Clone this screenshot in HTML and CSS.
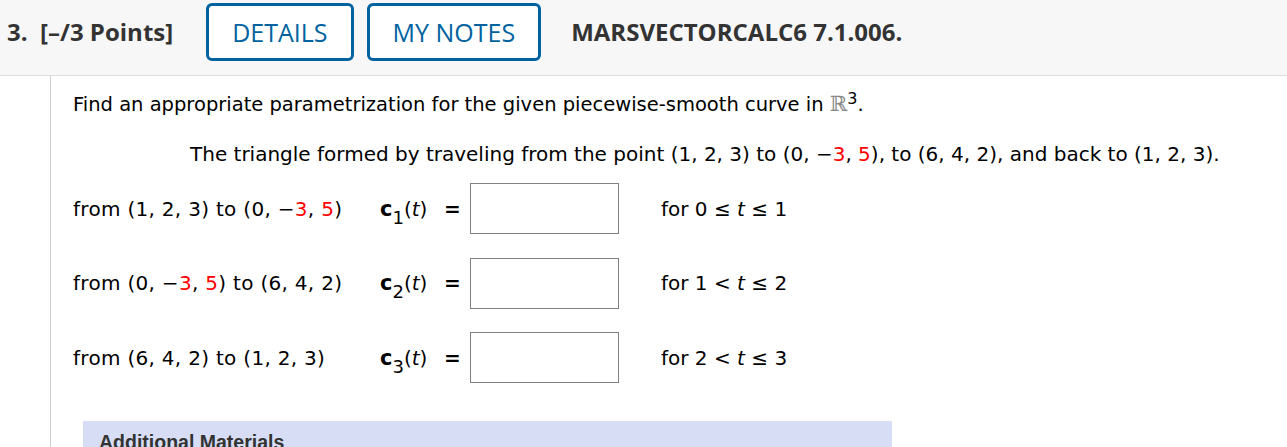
FILE: index.html
```html
<!DOCTYPE html>
<html lang="en">
<head>
    <meta charset="UTF-8">
    <title>MARSVECTORCALC6 7.1.006</title>
    <link rel="stylesheet" href="styles.css">
</head>
<body>
    <div class="question-header">
        <span class="q-number">3.&nbsp; [&ndash;/3 Points]</span>
        <button class="q-button">DETAILS</button>
        <button class="q-button">MY NOTES</button>
        <span class="q-ref">MARSVECTORCALC6 7.1.006.</span>
    </div>

    <div class="question-body">
        <p class="prompt">Find an appropriate parametrization for the given piecewise-smooth curve in <span class="reals">&#8477;</span><sup>3</sup>.</p>
        <p class="statement">The triangle formed by traveling from the point (1, 2, 3) to (0, &minus;<span class="red">3</span>, <span class="red">5</span>), to (6, 4, 2), and back to (1, 2, 3).</p>

        <div class="pieces">
            <span class="seg">from (1, 2, 3) to (0, &minus;<span class="red">3</span>, <span class="red">5</span>)</span>
            <span class="fn"><b>c</b><sub>1</sub>(<i>t</i>)</span>
            <span class="eq">=</span>
            <input class="answer" type="text">
            <span class="range">for 0 &le; <i>t</i> &le; 1</span>

            <span class="seg">from (0, &minus;<span class="red">3</span>, <span class="red">5</span>) to (6, 4, 2)</span>
            <span class="fn"><b>c</b><sub>2</sub>(<i>t</i>)</span>
            <span class="eq">=</span>
            <input class="answer" type="text">
            <span class="range">for 1 &lt; <i>t</i> &le; 2</span>

            <span class="seg">from (6, 4, 2) to (1, 2, 3)</span>
            <span class="fn"><b>c</b><sub>3</sub>(<i>t</i>)</span>
            <span class="eq">=</span>
            <input class="answer" type="text">
            <span class="range">for 2 &lt; <i>t</i> &le; 3</span>
        </div>

        <div class="materials">Additional Materials</div>
    </div>
</body>
</html>
```

FILE: styles.css
```css
* { box-sizing: border-box; }

body {
    margin: 0;
    background: #fff;
    color: #000;
    font-family: "DejaVu Sans", Verdana, sans-serif;
    overflow: hidden;
}

.question-header {
    display: flex;
    align-items: center;
    height: 76px;
    padding: 2px 0 14px 7px;
    background: #f7f7f7;
    border-bottom: 1px solid #dcdcdc;
    font-family: "Open Sans", sans-serif;
}

.q-number, .q-ref {
    font-size: 24px;
    font-weight: 700;
    color: #333;
}

.q-number { margin-right: 33px; }
.q-ref { margin-left: 17px; }

.q-button {
    height: 58px;
    padding: 0 23px;
    margin-right: 13px;
    background: #fff;
    border: 3px solid #00639f;
    border-radius: 6px;
    color: #00639f;
    font-family: "Open Sans", sans-serif;
    font-size: 25px;
    font-weight: 500;
}

.question-body {
    margin-left: 50px;
    padding: 14px 0 0 22px;
    border-left: 1px solid #cfcfcf;
    min-height: 400px;
}

.prompt, .statement {
    margin: 0;
    font-size: 19.5px;
    line-height: 28px;
}

.statement {
    margin-top: 21px;
    padding-left: 117px;
    font-size: 20px;
}

.reals {
    color: #888;
    font-family: "DejaVu Serif", serif;
    font-size: 21px;
}

sup { font-size: 16px; line-height: 0; }

.red { color: #f00; }

.pieces {
    display: grid;
    grid-template-columns: 307px 64px 26px 149px auto;
    grid-auto-rows: 51px;
    row-gap: 23.5px;
    align-items: center;
    margin-top: 15px;
    font-size: 20px;
}

.seg { letter-spacing: 0.3px; }

.fn b { font-weight: 700; font-size: 21px; }
.fn sub { font-size: 18px; line-height: 0; vertical-align: -8px; }

.eq { font-weight: 700; }

.answer {
    width: 149px;
    height: 51px;
    border: 1px solid #808080;
    background: #fff;
    margin: 0;
}

.range { padding-left: 42px; }

.materials {
    margin: 38px 0 0 10px;
    width: 809px;
    height: 40px;
    padding: 10px 16px;
    background: #d6ddf5;
    color: #333;
    font-family: "Liberation Sans", Arial, sans-serif;
    font-size: 19.5px;
    font-weight: 700;
}
```
